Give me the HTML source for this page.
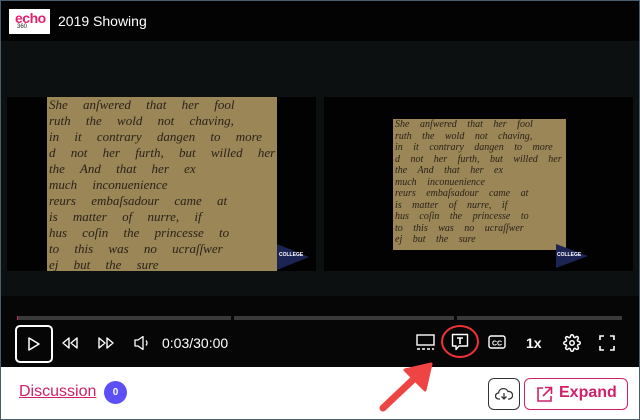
<!DOCTYPE html>
<html><head><style>
*{margin:0;padding:0;box-sizing:border-box}
body{width:640px;height:420px;background:#4b5d6b;font-family:"Liberation Sans",sans-serif;position:relative;overflow:hidden}
#f{position:absolute;left:1px;top:1px;width:638px;height:418px;background:#fff;overflow:hidden}
.abs{position:absolute}
.paper{background:#9a8656;}
.txt{color:#2a2218;font-family:"Liberation Serif",serif;font-style:italic;font-size:13px;line-height:16px;white-space:nowrap;overflow:hidden;padding-left:2px;word-spacing:12px}
.ic{position:absolute;top:330px}
</style></head><body><div id="f">
<div class="abs" style="left:0;top:0;width:638px;height:40px;background:#030303"></div>
<div class="abs" style="left:8px;top:8px;width:41px;height:25px;background:#fff"></div>
<div class="abs" style="left:14px;top:9px;font-size:14px;font-weight:bold;color:#e0226e;letter-spacing:-.5px">echo</div>
<div class="abs" style="left:16px;top:23px;font-size:6px;color:#222">360</div>
<div class="abs" style="left:57px;top:12px;font-size:14px;color:#fff">2019 Showing</div>
<div class="abs" style="left:0;top:40px;width:638px;height:255px;background:#0d1011"></div>
<div class="abs" style="left:6px;top:96px;width:309px;height:174px;background:#020202"></div>
<div class="abs paper txt" style="left:46px;top:96px;width:230px;height:174px">She anſwered that her fool<br>  ruth the wold not chaving,<br>in it contrary dangen to more<br>d not her furth, but willed her<br>  the And that her ex<br>much inconuenience<br>reurs embaſsadour came at<br>is matter of nurre, if<br>hus coſin the princesse to<br>to this was no ucraſſwer<br>ej but the sure<br>  s  lordon</div>
<div class="abs" style="left:276px;top:243px;width:0;height:0;border-top:13px solid transparent;border-bottom:13px solid transparent;border-left:32px solid #1c2454"></div>
<div class="abs" style="left:278px;top:251px;font-size:5px;color:#fff;font-weight:bold">COLLEGE</div>
<div class="abs" style="left:323px;top:96px;width:309px;height:174px;background:#020202"></div>
<div class="abs paper txt" style="left:392px;top:118px;width:173px;height:131px;font-size:10px;line-height:11.5px;word-spacing:8px">She anſwered that her fool<br>  ruth the wold not chaving,<br>in it contrary dangen to more<br>d not her furth, but willed her<br>  the And that her ex<br>much inconuenience<br>reurs embaſsadour came at<br>is matter of nurre, if<br>hus coſin the princesse to<br>to this was no ucraſſwer<br>ej but the sure</div>
<div class="abs" style="left:555px;top:243px;width:0;height:0;border-top:12px solid transparent;border-bottom:12px solid transparent;border-left:32px solid #1c2454"></div>
<div class="abs" style="left:556px;top:251px;font-size:5px;color:#fff;font-weight:bold">COLLEGE</div>
<div class="abs" style="left:0;top:295px;width:638px;height:71px;background:#060606"></div>
<div class="abs" style="left:16px;top:315px;width:214px;height:4px;background:#3a3a3a;border-left:1px solid #d0206a"></div>
<div class="abs" style="left:233px;top:315px;width:220px;height:4px;background:#3a3a3a"></div>
<div class="abs" style="left:456px;top:315px;width:165px;height:4px;background:#3a3a3a"></div>
<div class="abs" style="left:14px;top:324px;width:38px;height:38px;border:2px solid #fff;border-radius:5px"></div>
<svg class="ic" style="left:26px;top:335px" width="14" height="16"><path d="M2 2 L12 8 L2 14Z" fill="none" stroke="#fff" stroke-width="1.5" stroke-linejoin="round"/></svg>
<svg class="ic" style="left:60px;top:335px" width="18" height="14"><path d="M8 2 L2 7 L8 12Z M16 2 L10 7 L16 12Z" fill="none" stroke="#fff" stroke-width="1.4" stroke-linejoin="round"/></svg>
<svg class="ic" style="left:96px;top:335px" width="18" height="14"><path d="M2 2 L8 7 L2 12Z M10 2 L16 7 L10 12Z" fill="none" stroke="#fff" stroke-width="1.4" stroke-linejoin="round"/></svg>
<svg class="ic" style="left:132px;top:334px" width="20" height="16"><path d="M2 5 H5 L10 1.5 V14.5 L5 11 H2Z" fill="none" stroke="#fff" stroke-width="1.3" stroke-linejoin="round"/><path d="M13 5.5 Q15 8 13 10.5" fill="none" stroke="#fff" stroke-width="1.3"/></svg>
<div class="abs" style="left:161px;top:334px;font-size:14px;color:#fff">0:03/30:00</div>
<svg class="ic" style="left:415px;top:333px" width="20" height="18"><rect x="1" y="1" width="17" height="10" fill="none" stroke="#fff" stroke-width="1.4"/><path d="M1 15h3M6 15h3M11 15h3M16 15h2" stroke="#fff" stroke-width="1.6"/></svg>
<div class="abs" style="left:440px;top:324px;width:38px;height:33px;border:2px solid #e33;border-radius:50%"></div>
<svg class="ic" style="left:450px;top:332px" width="18" height="19"><path d="M1.5 1.5 H16.5 V13 H8 L5 16.5 V13 H1.5Z" fill="none" stroke="#fff" stroke-width="1.4" stroke-linejoin="round"/><path d="M6 5 H12 M9 5 V11" stroke="#fff" stroke-width="1.6"/></svg>
<svg class="ic" style="left:487px;top:334px" width="19" height="15"><rect x="1" y="1" width="16" height="12" rx="2" fill="none" stroke="#fff" stroke-width="1.4"/><text x="9" y="10.5" font-size="7" font-weight="bold" fill="#fff" text-anchor="middle" font-family="Liberation Sans">CC</text></svg>
<div class="abs" style="left:525px;top:334px;font-size:14px;font-weight:bold;color:#fff">1x</div>
<svg class="ic" style="left:562px;top:333px" width="18" height="18" viewBox="0 0 24 24"><circle cx="12" cy="12" r="3" fill="none" stroke="#fff" stroke-width="2"/><path d="M19.4 15a1.7 1.7 0 0 0 .3 1.8l.1.1a2 2 0 1 1-2.8 2.8l-.1-.1a1.7 1.7 0 0 0-1.8-.3 1.7 1.7 0 0 0-1 1.5V21a2 2 0 1 1-4 0v-.1a1.7 1.7 0 0 0-1.100-1.5 1.7 1.7 0 0 0-1.8.3l-.1.1a2 2 0 1 1-2.8-2.8l.1-.1a1.7 1.7 0 0 0 .3-1.8 1.7 1.7 0 0 0-1.5-1H3a2 2 0 1 1 0-4h.1a1.7 1.7 0 0 0 1.5-1.100 1.7 1.7 0 0 0-.3-1.8l-.1-.1a2 2 0 1 1 2.8-2.8l.1.1a1.7 1.7 0 0 0 1.8.3H9a1.7 1.7 0 0 0 1-1.5V3a2 2 0 1 1 4 0v.1a1.7 1.7 0 0 0 1 1.5 1.7 1.7 0 0 0 1.8-.3l.1-.1a2 2 0 1 1 2.8 2.8l-.1.1a1.7 1.7 0 0 0-.3 1.8V9a1.7 1.7 0 0 0 1.5 1H21a2 2 0 1 1 0 4h-.1a1.7 1.7 0 0 0-1.5 1z" fill="none" stroke="#fff" stroke-width="2"/></svg>
<svg class="ic" style="left:598px;top:334px" width="16" height="16"><path d="M1 5V1H5M11 1H15V5M15 11V15H11M5 15H1V11" fill="none" stroke="#fff" stroke-width="1.6"/></svg>
<div class="abs" style="left:18px;top:382px;font-size:16px;color:#d0206a;text-decoration:underline">Discussion</div>
<div class="abs" style="left:103px;top:380px;width:23px;height:23px;border-radius:50%;background:#5b4ff5;color:#fff;font-size:10px;font-weight:bold;text-align:center;line-height:23px">0</div>
<div class="abs" style="left:487px;top:377px;width:32px;height:32px;border:1px solid #333;border-radius:6px"></div>
<svg class="abs" style="left:494px;top:386px" width="18" height="14"><path d="M5 12 H3.5 A3 3 0 0 1 3.5 6 A5 5 0 0 1 13 4.5 A3.5 3.5 0 0 1 14.5 12 H13" fill="none" stroke="#333" stroke-width="1.3"/><path d="M9 6V12 M6.5 9.5 L9 12 L11.5 9.5" fill="none" stroke="#333" stroke-width="1.3"/></svg>
<div class="abs" style="left:523px;top:377px;width:104px;height:32px;border:1px solid #d0206a;border-radius:6px"></div>
<svg class="abs" style="left:535px;top:385px" width="17" height="17"><path d="M7 2H2V15H15V10" fill="none" stroke="#d0206a" stroke-width="1.6"/><path d="M9 1.5H15.5V8 M15.5 1.5 L7 10" fill="none" stroke="#d0206a" stroke-width="1.6"/></svg>
<div class="abs" style="left:558px;top:383px;font-size:16px;font-weight:bold;color:#d0206a">Expand</div>
<svg class="abs" style="left:370px;top:355px" width="70" height="60"><path d="M12 52 L48 18" stroke="#ee4444" stroke-width="7" stroke-linecap="round"/><path d="M60 8 L34 14 L54 34Z" fill="#ee4444" stroke="#ee4444" stroke-width="3" stroke-linejoin="round"/></svg>
</div></body></html>
